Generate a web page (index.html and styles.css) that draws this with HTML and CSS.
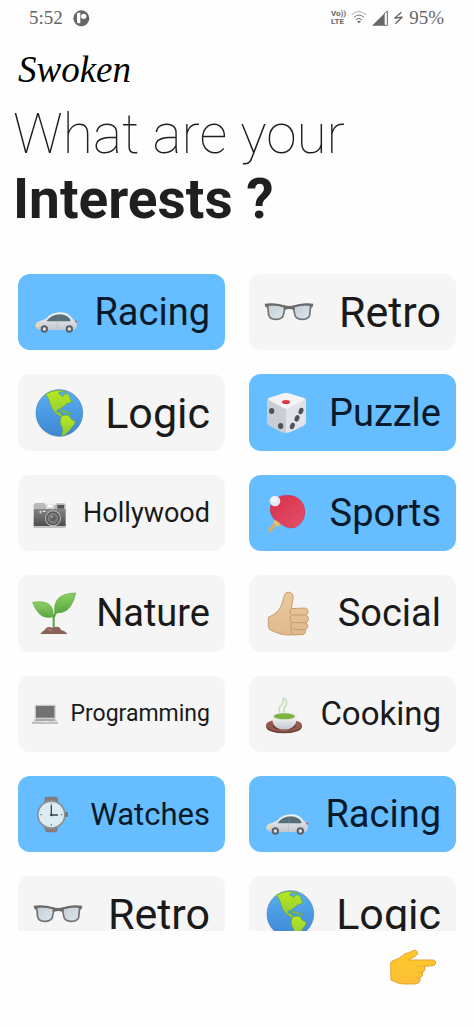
FILE: index.html
```html
<!DOCTYPE html>
<html lang="en">
<head>
    <meta charset="UTF-8">
    <meta name="viewport" content="width=device-width, initial-scale=1.0">
    <title>Swoken</title>
    <link rel="stylesheet" href="styles.css">
</head>
<body>
    <!-- shared icons -->
    <svg class="sprite" aria-hidden="true">
        <defs>
            <linearGradient id="carBody" x1="0" y1="0" x2="0" y2="1">
                <stop offset="0" stop-color="#f4f5f7"/><stop offset="1" stop-color="#c3c7d0"/>
            </linearGradient>
            <linearGradient id="sea" x1="0" y1="0" x2="0" y2="1">
                <stop offset="0" stop-color="#58b0f2"/><stop offset="1" stop-color="#3f86d2"/>
            </linearGradient>
            <linearGradient id="land" x1="0" y1="0" x2="0" y2="1">
                <stop offset="0" stop-color="#b9ea1c"/><stop offset="1" stop-color="#8fc63c"/>
            </linearGradient>
            <linearGradient id="lens" x1="0" y1="0" x2="1" y2="1">
                <stop offset="0" stop-color="#c3ced4"/><stop offset="1" stop-color="#dce8ed"/>
            </linearGradient>
            <linearGradient id="dark" x1="0" y1="0" x2="0" y2="1">
                <stop offset="0" stop-color="#858585"/><stop offset="1" stop-color="#4c4c4c"/>
            </linearGradient>
            <linearGradient id="leaf" x1="0" y1="0" x2="0" y2="1">
                <stop offset="0" stop-color="#8fd066"/><stop offset="1" stop-color="#58a63f"/>
            </linearGradient>
            <linearGradient id="rubber" x1="0" y1="0" x2="1" y2="1">
                <stop offset="0" stop-color="#d9304a"/><stop offset="1" stop-color="#e2506a"/>
            </linearGradient>
            <linearGradient id="skin" x1="0" y1="0" x2="0" y2="1">
                <stop offset="0" stop-color="#ebc9a0"/><stop offset="1" stop-color="#dfb98c"/>
            </linearGradient>
            <linearGradient id="hand" x1="0" y1="0" x2="0" y2="1">
                <stop offset="0" stop-color="#ffca28"/><stop offset="1" stop-color="#fbbf36"/>
            </linearGradient>
        </defs>

        <symbol id="car" viewBox="66 50 156 180">
            <path fill="url(#carBody)" d="M76 182Q75 172 88 168L108 160Q124 141 152 141Q178 142 189 162L198 166Q203 178 199 189Q196 194 188 194H94Q77 193 76 182Z"/>
            <path fill="#546e7a" d="M110 167Q124 148 150 147Q174 148 182 165L180 168H112Z"/>
            <path fill="none" stroke="#90a4ae" stroke-width="1" d="M147 147L142 168V190"/>
            <path fill="#e6dd9c" d="M77 178Q84 172 91 174Q91 182 79 186Z"/>
            <path fill="#c0506a" d="M194 165L200 167L200 172L195 170Z"/>
            <circle cx="103" cy="191" r="11" fill="#5a6066"/>
            <circle cx="103" cy="191" r="5" fill="#e0e3e6"/>
            <circle cx="178" cy="191" r="11" fill="#5a6066"/>
            <circle cx="178" cy="191" r="5" fill="#e0e3e6"/>
        </symbol>

        <symbol id="glasses" viewBox="69 50 156 180">
            <path fill="url(#lens)" stroke="#737373" stroke-width="5" stroke-linejoin="round" d="M83 119Q105 115 133 123Q135 136 129 153Q122 163 106 162Q90 162 86 150Z"/>
            <path fill="url(#lens)" stroke="#737373" stroke-width="5" stroke-linejoin="round" d="M212 119Q190 115 162 123Q160 136 166 153Q173 163 189 162Q205 162 209 150Z"/>
            <path fill="#6b6b6b" d="M74 115Q105 111 132 120Q148 124 163 120Q190 111 220 115L218 124L213 128L210 121Q190 117 164 126L161 134Q148 128 134 134L131 126Q105 117 85 121L82 128L76 124Z"/>
        </symbol>

        <symbol id="globe" viewBox="66 351 156 180">
            <circle cx="148" cy="441" r="70" fill="url(#sea)" stroke="#3f7fbf" stroke-width="2"/>
            <path fill="url(#land)" stroke="#5f9e52" stroke-width="2" stroke-linejoin="round" d="M107 385Q125 373 147 373L160 375L170 378L168 382L158 377L146 379L148 386L156 388L157 393L163 385L172 383Q182 391 182 402L188 406L178 411Q166 413 162 421L152 427L153 433L146 429L140 434L143 440L151 437L152 445L160 450L154 453Q142 447 135 440Q124 428 119 410Q116 396 107 385Z"/>
            <path fill="#a6d62e" stroke="#5f9e52" stroke-width="2" stroke-linejoin="round" d="M154 433L166 434L176 440L185 440L186 444L174 443L164 438L154 438Z"/>
            <path fill="url(#land)" stroke="#5f9e52" stroke-width="2" stroke-linejoin="round" d="M153 452Q164 444 176 448L184 460L196 466Q196 476 187 482Q182 494 170 501Q166 509 154 510Q160 495 157 484Q148 474 151 464Z"/>
        </symbol>
    </svg>

    <header class="status-bar">
        <span class="clock">5:52</span>
        <svg class="badge" viewBox="0 0 51 51" aria-hidden="true">
            <circle cx="25" cy="25" r="24" fill="#666"/>
            <path fill="#fff" d="M12 12Q12 8 17 8H22V40H18Q12 40 12 36Z"/>
            <circle cx="32" cy="19" r="8" fill="#fff"/>
        </svg>
        <span class="volte">Vo))<br>LTE</span>
        <svg class="wifi" viewBox="0 0 48 48" fill="none" stroke="#777" stroke-width="3" aria-hidden="true">
            <path stroke="#aaa" d="M2 15Q24 -6 46 15"/>
            <path d="M9 22Q24 8 39 22"/>
            <path d="M15 29Q24 21 33 29"/>
            <path fill="#666" stroke="none" d="M18 34Q24 30 30 34L24 40Z"/>
        </svg>
        <svg class="signal" viewBox="0 0 48 48" aria-hidden="true">
            <path fill="#666" d="M0 47L38 10V47Z"/>
            <path fill="none" stroke="#666" stroke-width="3" d="M36 12L46 3V46H36"/>
        </svg>
        <svg class="bolt" viewBox="0 0 33 48" aria-hidden="true">
            <path fill="none" stroke="#666" stroke-width="4" stroke-linejoin="bevel" d="M25 7L5 25L28 21L7 41"/>
        </svg>
        <span class="battery">95%</span>
    </header>

    <div class="logo">Swoken</div>
    <h1 class="title">
        <span class="title-thin">What are your</span>
        <span class="title-bold">Interests ?</span>
    </h1>

    <main class="interests">
        <button type="button" class="chip chip-lg selected">
            <svg class="icon"><use href="#car"/></svg>Racing
        </button>
        <button type="button" class="chip chip-xl">
            <svg class="icon"><use href="#glasses"/></svg>Retro
        </button>
        <button type="button" class="chip chip-xl">
            <svg class="icon"><use href="#globe"/></svg>Logic
        </button>
        <button type="button" class="chip chip-lg selected">
            <svg class="icon" viewBox="69 351 156 180">
                <path fill="#c9ced6" d="M81 405Q81 394 92 396L138 418V500Q132 502 124 498L88 479Q81 476 81 468Z"/>
                <path fill="#e1e3e8" d="M198 405Q198 394 187 396L138 418V500Q146 501 152 498L191 479Q198 475 198 468Z"/>
                <path fill="#f4f4f6" d="M86 396L130 382Q138 379 146 382L193 396Q196 399 191 403L144 427Q138 430 132 427L88 403Q82 399 86 396Z"/>
                <ellipse cx="138" cy="408" rx="12" ry="6" fill="#dc3545"/>
                <ellipse cx="95" cy="435" rx="8" ry="9" fill="#4d5358"/>
                <ellipse cx="122" cy="480" rx="8" ry="9" fill="#4d5358"/>
                <ellipse cx="183" cy="435" rx="7" ry="10" fill="#4d5358" transform="rotate(20 183 435)"/>
                <ellipse cx="171" cy="457" rx="7" ry="10" fill="#4d5358" transform="rotate(20 171 457)"/>
                <ellipse cx="157" cy="480" rx="7" ry="10" fill="#4d5358" transform="rotate(20 157 480)"/>
            </svg>Puzzle
        </button>
        <button type="button" class="chip chip-sm">
            <svg class="icon icon-sm" viewBox="66 53 108 180">
                <path fill="#b9b9b9" d="M71 118L76 113H103L107 119H136L140 114H163L167 118V132H71Z"/>
                <rect x="108" y="115" width="24" height="15" rx="2" fill="#dedede"/>
                <rect x="113" y="118" width="14" height="7" fill="#fff"/>
                <rect x="142" y="119" width="20" height="11" fill="#555"/>
                <rect x="71" y="131" width="96" height="52" fill="url(#dark)"/>
                <rect x="71" y="182" width="96" height="6" fill="#c2c2c2"/>
                <path fill="#ddd" d="M89 136H94V144H89ZM98 136H107V140H98Z"/>
                <circle cx="129" cy="159" r="24" fill="#bdbdbd"/>
                <circle cx="129" cy="159" r="21" fill="#555"/>
                <circle cx="129" cy="159" r="15" fill="#777" stroke="#999" stroke-width="2"/>
                <circle cx="129" cy="159" r="9" fill="#606060"/>
                <circle cx="125" cy="154" r="3" fill="#bbb"/>
            </svg>Hollywood
        </button>
        <button type="button" class="chip chip-lg selected">
            <svg class="icon" viewBox="69 53 156 180">
                <path stroke="#dcae6c" stroke-width="11" stroke-linecap="round" d="M112 170L90 194"/>
                <path fill="#c9955a" d="M104 160L126 180L117 182L102 169Z"/>
                <path fill="url(#rubber)" stroke="#c23a56" stroke-width="2" d="M104 163Q84 140 94 116Q106 91 140 90Q172 90 187 112Q198 130 193 152Q186 176 166 186Q148 192 131 181L119 171Z"/>
                <path fill="#e7bd7b" d="M105 163Q114 168 121 178L112 184L100 173Z"/>
                <circle cx="105" cy="107" r="16" fill="#e4e9ef"/>
                <circle cx="102" cy="103" r="9" fill="#f4f6f8"/>
            </svg>Sports
        </button>
        <button type="button" class="chip chip-lg">
            <svg class="icon" viewBox="66 354 156 180">
                <path fill="none" stroke="#5aa243" stroke-width="6" stroke-linecap="round" d="M131 486V455Q127 444 106 430M131 458Q136 440 166 412"/>
                <path fill="url(#leaf)" stroke="#5ba845" stroke-width="2" d="M68 412Q110 405 124 425Q131 437 130 455Q103 462 88 446Q76 434 68 412Z"/>
                <path fill="url(#leaf)" stroke="#5ba845" stroke-width="2" d="M197 384Q157 384 141 405Q132 418 134 443Q164 447 180 426Q192 409 197 384Z"/>
                <path fill="none" stroke="#7fc25b" stroke-width="2" d="M77 416Q104 426 127 451M190 389Q157 411 137 438"/>
                <path fill="#8a6257" d="M91 507Q96 500 104 495Q108 486 119 486Q128 489 135 486Q149 483 153 495Q164 496 173 507Z"/>
                <path fill="#a87969" d="M110 495Q113 489 121 491L130 495L124 499Z"/>
            </svg>Nature
        </button>
        <button type="button" class="chip chip-lg">
            <svg class="icon" viewBox="69 354 156 180">
                <path fill="url(#skin)" stroke="#c99b6b" stroke-width="3" stroke-linejoin="round" d="M85 457Q101 450 111 441Q125 428 128 409L134 388Q139 379 149 382Q161 387 159 402L154 431L194 429Q206 431 204 442Q203 449 198 450Q207 455 205 464Q203 472 198 473Q206 478 203 487Q200 494 194 494Q199 501 194 506Q190 510 181 509L144 510Q124 510 111 503L93 496Q85 492 85 482Z"/>
                <path fill="none" stroke="#c99b6b" stroke-width="3" stroke-linecap="round" d="M154 431Q148 437 150 445Q154 451 164 450H198M152 452Q146 462 153 470Q158 474 166 473H198M154 474Q148 484 156 491Q161 495 194 494M154 493Q150 501 158 508"/>
            </svg>Social
        </button>
        <button type="button" class="chip chip-xs">
            <svg class="icon icon-sm" viewBox="66 55 108 180">
                <rect x="74" y="117" width="63" height="43" rx="3" fill="#c8c8c8"/>
                <rect x="78" y="121" width="55" height="35" fill="#717171"/>
                <path fill="#dadada" d="M74 159H137L144 170H66Z"/>
                <path fill="#999" d="M77 161H134L136 165H75Z"/>
                <path fill="#f2f2f2" d="M96 167H115L116 169H95Z"/>
                <rect x="66" y="170" width="78" height="4" rx="1" fill="#b0b0b0"/>
            </svg>Programming
        </button>
        <button type="button" class="chip chip-ml">
            <svg class="icon" viewBox="69 55 156 180">
                <ellipse cx="132" cy="183" rx="54" ry="20" fill="#6f4038"/>
                <ellipse cx="132" cy="179" rx="54" ry="19" fill="#935a50"/>
                <ellipse cx="132" cy="182" rx="35" ry="11" fill="#6f4038"/>
                <path fill="url(#carBody)" d="M96 152Q96 184 118 190Q133 194 149 189Q171 182 171 152Z"/>
                <ellipse cx="133" cy="151" rx="39" ry="14" fill="#eceef0"/>
                <ellipse cx="133" cy="152" rx="32" ry="9" fill="#7cb342"/>
                <path fill="none" stroke="#c9dfbc" stroke-width="5" stroke-linecap="round" d="M119 139Q114 127 124 119Q132 110 130 97M133 139Q130 128 137 120Q143 111 136 98"/>
            </svg>Cooking
        </button>
        <button type="button" class="chip chip-md selected">
            <svg class="icon" viewBox="66 356 156 180">
                <path fill="#777d85" d="M105 397Q105 394 109 394H138Q142 394 142 397L147 420H101ZM101 478H147L141 497Q140 501 135 501H112Q107 501 106 497Z"/>
                <path fill="#8e7a78" d="M108 398H139V408H108ZM108 488H139V498H108Z"/>
                <rect x="164" y="440" width="9" height="15" rx="4" fill="#656b72"/>
                <circle cx="124" cy="448" r="43" fill="#8a9299"/>
                <circle cx="124" cy="448" r="38" fill="#dceaf2"/>
                <path fill="none" stroke="#3f474d" stroke-width="4" d="M124 420V449H144"/>
                <path stroke="#666e75" stroke-width="3" d="M124 414V418M124 476V481M91 448H96M152 448H157"/>
                <circle cx="124" cy="449" r="4" fill="#3f474d"/>
            </svg>Watches
        </button>
        <button type="button" class="chip chip-lg selected">
            <svg class="icon"><use href="#car"/></svg>Racing
        </button>
        <button type="button" class="chip chip-xl">
            <svg class="icon"><use href="#glasses"/></svg>Retro
        </button>
        <button type="button" class="chip chip-xl">
            <svg class="icon"><use href="#globe"/></svg>Logic
        </button>
    </main>

    <footer class="footer">
        <button type="button" class="next" aria-label="Next">
            <svg viewBox="444 252 144 108">
                <path fill="url(#hand)" stroke="#e5a12f" stroke-width="3" stroke-linejoin="round" d="M449 293Q452 287 462 285Q475 281 484 272Q492 265 503 263L519 256Q526 254 529 261Q531 267 525 272L503 285L577 285Q585 287 584 294Q583 301 576 302L550 304Q554 315 549 319Q546 322 543 322Q547 332 542 335L536 338Q540 349 533 353Q529 357 519 357H492Q476 357 466 352L450 345Z"/>
                <path fill="none" stroke="#e5a12f" stroke-width="2" stroke-linecap="round" d="M550 304L529 303M543 322H530M536 338H525"/>
            </svg>
        </button>
    </footer>
</body>
</html>
```
FILE: styles.css
```css
* {
    box-sizing: border-box;
}
body {
    display: flex;
    flex-direction: column;
    height: 100vh;
    margin: 0;
    background-color: #fefefe;
    color: #1f1f1f;
    font-family: Roboto, sans-serif;
}
.sprite {
    width: 0;
    height: 0;
    flex: none;
}
.status-bar {
    display: flex;
    align-items: center;
    gap: 5px;
    height: 36px;
    padding: 0 30px 0 29px;
    color: #666;
    font-family: "Liberation Serif", serif;
    font-size: 19px;
}
.badge {
    width: 17px;
    height: 17px;
    margin-left: 5px;
}
.volte {
    margin-left: auto;
    font-family: Roboto, sans-serif;
    font-size: 8px;
    font-weight: bold;
    line-height: 8px;
}
.wifi, .signal {
    width: 16px;
    height: 16px;
}
.bolt {
    width: 11px;
    height: 16px;
}
.logo {
    padding: 12px 18px 0;
    color: black;
    font-family: "Liberation Serif", serif;
    font-size: 37px;
    font-style: italic;
    line-height: 44px;
}
.title {
    margin: 10px 0 0;
    padding: 0 13px;
    font-size: 55px;
    line-height: 65px;
}
.title span {
    display: block;
}
.title-thin {
    font-weight: 100;
}
.title-bold {
    font-weight: bold;
}
.interests {
    flex: 1;
    display: grid;
    grid-template-columns: 1fr 1fr;
    align-content: start;
    gap: 24px;
    min-height: 0;
    margin-top: 42px;
    padding: 0 18px;
    overflow-y: auto;
    scrollbar-width: none;
}
.chip {
    display: flex;
    align-items: center;
    justify-content: space-between;
    aspect-ratio: 2.71;
    min-width: 0;
    padding: 0 15px 0 14px;
    border: none;
    border-radius: 12px;
    background-color: #f5f5f5;
    color: #1a1a1a;
    font-family: Roboto, sans-serif;
    cursor: pointer;
}
.selected {
    background-color: #66bdff;
    color: #061a2b;
}
.chip-xs {
    font-size: 23px;
}
.chip-sm {
    font-size: 27px;
}
.chip-md {
    font-size: 31px;
}
.chip-ml {
    font-size: 33px;
}
.chip-lg {
    font-size: 38px;
}
.chip-xl {
    font-size: 43px;
}
.icon {
    flex: none;
    width: 52px;
    height: 60px;
}
.icon-sm {
    width: 36px;
}
.footer {
    display: flex;
    justify-content: flex-end;
    align-items: flex-start;
    height: 96px;
    padding: 18px 37px;
}
.next {
    padding: 0;
    border: none;
    background: none;
    cursor: pointer;
}
.next svg {
    display: block;
    width: 48px;
    height: 36px;
}
```
